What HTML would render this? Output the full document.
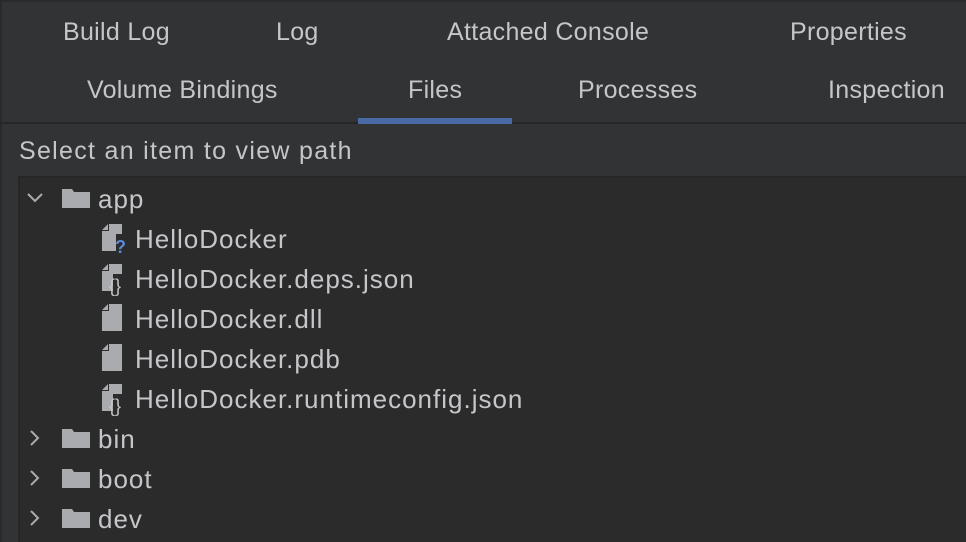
<!DOCTYPE html>
<html><head><style>
html,body{margin:0;padding:0;width:966px;height:542px;overflow:hidden;}
body{background:#313335;position:relative;font-family:"Liberation Sans",sans-serif;color:#c4c6c9;}
.t{position:absolute;font-size:25px;letter-spacing:0.3px;white-space:nowrap;line-height:28px;}
.topline{position:absolute;left:0;top:0;width:966px;height:2px;background:#2a2a2a;}
.leftline{position:absolute;left:0;top:0;width:2px;height:542px;background:#2a2a2a;}
.sep{position:absolute;left:0;top:122px;width:966px;height:2px;background:#262626;}
.ul{position:absolute;left:358px;top:118px;width:154px;height:6px;background:#4a6aa5;}
.tree{position:absolute;left:18px;top:176px;width:948px;height:366px;background:#2b2b2b;border-top:2px solid #262626;border-left:2px solid #262626;}
.row{position:absolute;font-size:26px;letter-spacing:1px;line-height:28px;white-space:nowrap;}
svg{position:absolute;overflow:visible;}
</style></head><body>
<div class="topline"></div><div class="leftline"></div>
<div class="t" style="left:63px;top:18px">Build Log</div>
<div class="t" style="left:276px;top:18px">Log</div>
<div class="t" style="left:447px;top:18px">Attached Console</div>
<div class="t" style="left:790px;top:18px">Properties</div>
<div class="t" style="left:87px;top:76px">Volume Bindings</div>
<div class="t" style="left:408px;top:76px">Files</div>
<div class="t" style="left:578px;top:76px">Processes</div>
<div class="t" style="left:828px;top:76px">Inspection</div>
<div class="sep"></div><div class="ul"></div>
<div class="t" style="left:19px;top:137px;letter-spacing:1.3px">Select an item to view path</div>
<div class="tree"></div>

<svg style="left:26px;top:190px" width="20" height="16"><path d="M2 4 L9 11 L16 4" stroke="#a9abae" stroke-width="2" fill="none"/></svg>
<svg style="left:62px;top:189px" width="28" height="20"><path d="M0 0 H10 L12 3 H28 V19 H0 Z" fill="#a9abae"/></svg>
<div class="row" style="left:98px;top:185px">app</div>

<svg style="left:102px;top:224px" width="30" height="30"><path d="M0 6 L6 0 V6 Z M0 7 H7 V0 H20 V10 H14 V27 H0 Z" fill="#a9abae"/><text x="13" y="29" font-size="18" font-weight="bold" fill="#5c8ad6" font-family="Liberation Sans">?</text></svg>
<div class="row" style="left:135px;top:225px">HelloDocker</div>

<svg style="left:102px;top:264px" width="30" height="30"><path d="M0 6 L6 0 V6 Z M0 7 H7 V0 H20 V10 H11 V27 H0 Z" fill="#a9abae"/><text x="7" y="28" font-size="18" fill="#c4c6c9" font-family="Liberation Sans">{}</text></svg>
<div class="row" style="left:135px;top:265px">HelloDocker.deps.json</div>

<svg style="left:102px;top:304px" width="30" height="30"><path d="M0 6 L6 0 V6 Z M0 7 H7 V0 H20 V27 H0 Z" fill="#a9abae"/></svg>
<div class="row" style="left:135px;top:305px">HelloDocker.dll</div>

<svg style="left:102px;top:344px" width="30" height="30"><path d="M0 6 L6 0 V6 Z M0 7 H7 V0 H20 V27 H0 Z" fill="#a9abae"/></svg>
<div class="row" style="left:135px;top:345px">HelloDocker.pdb</div>

<svg style="left:102px;top:384px" width="30" height="30"><path d="M0 6 L6 0 V6 Z M0 7 H7 V0 H20 V10 H11 V27 H0 Z" fill="#a9abae"/><text x="7" y="28" font-size="18" fill="#c4c6c9" font-family="Liberation Sans">{}</text></svg>
<div class="row" style="left:135px;top:385px">HelloDocker.runtimeconfig.json</div>

<svg style="left:28px;top:429px" width="16" height="20"><path d="M3 2 L10 9 L3 16" stroke="#a9abae" stroke-width="2" fill="none"/></svg>
<svg style="left:62px;top:429px" width="28" height="20"><path d="M0 0 H10 L12 3 H28 V19 H0 Z" fill="#a9abae"/></svg>
<div class="row" style="left:98px;top:425px">bin</div>

<svg style="left:28px;top:469px" width="16" height="20"><path d="M3 2 L10 9 L3 16" stroke="#a9abae" stroke-width="2" fill="none"/></svg>
<svg style="left:62px;top:469px" width="28" height="20"><path d="M0 0 H10 L12 3 H28 V19 H0 Z" fill="#a9abae"/></svg>
<div class="row" style="left:98px;top:465px">boot</div>

<svg style="left:28px;top:509px" width="16" height="20"><path d="M3 2 L10 9 L3 16" stroke="#a9abae" stroke-width="2" fill="none"/></svg>
<svg style="left:62px;top:509px" width="28" height="20"><path d="M0 0 H10 L12 3 H28 V19 H0 Z" fill="#a9abae"/></svg>
<div class="row" style="left:98px;top:505px">dev</div>
</body></html>
